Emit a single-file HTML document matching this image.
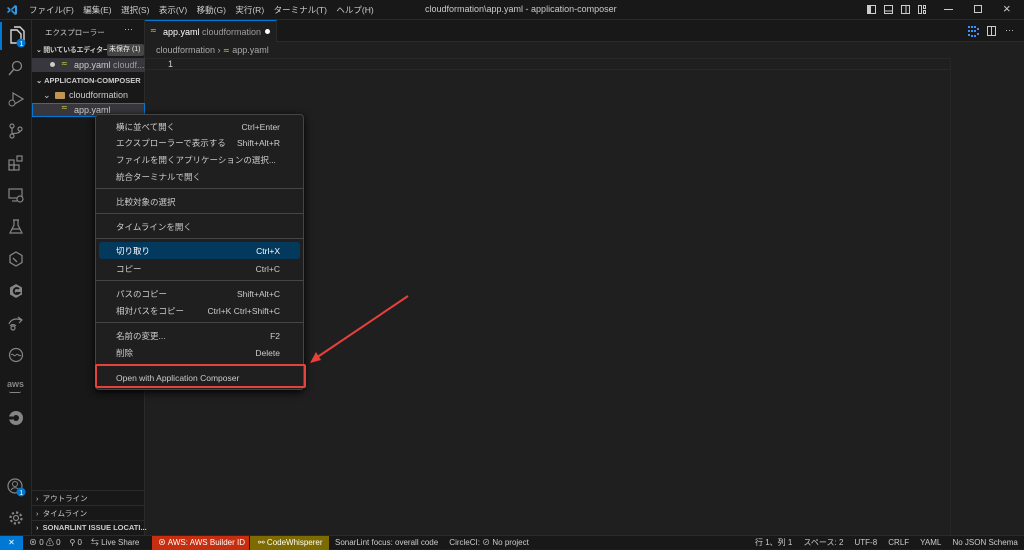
<!DOCTYPE html><html><head><meta charset="utf-8"><style>
*{margin:0;padding:0;box-sizing:border-box}
body{width:1024px;height:549px;overflow:hidden;background:#1f1f1f;font-family:"Liberation Sans","Noto Sans CJK JP",sans-serif;font-size:9px;color:#ccc;position:relative}
.a{position:absolute;white-space:nowrap}
.mi{position:absolute;left:20px;right:6px;height:16px;line-height:16px;padding:0 0 0 0;font-size:8.5px}
.mi span{position:absolute;right:17px}
.sep{position:absolute;left:0;right:0;height:1px;background:#454545}
</style></head><body>
<div class="a" style="left:0;top:0;width:1024px;height:20px;background:#181818;border-bottom:1px solid #2b2b2b"></div>
<svg class="a" style="left:6px;top:4px" width="12" height="12" viewBox="0 0 12 12"><path d="M9 1L4 6l5 5 2-1V2z M9 3.5L6 6l3 2.5z M1 4l1-1 4 3-4 3-1-1 2-2z" fill="#2f9ae8" fill-rule="evenodd"/></svg>
<div class="a" style="left:29px;top:4px;color:#ccc;font-size:8.5px">ファイル(F)&nbsp;&nbsp;&nbsp;&nbsp;編集(E)&nbsp;&nbsp;&nbsp;&nbsp;選択(S)&nbsp;&nbsp;&nbsp;&nbsp;表示(V)&nbsp;&nbsp;&nbsp;&nbsp;移動(G)&nbsp;&nbsp;&nbsp;&nbsp;実行(R)&nbsp;&nbsp;&nbsp;&nbsp;ターミナル(T)&nbsp;&nbsp;&nbsp;&nbsp;ヘルプ(H)</div>
<div class="a" style="left:425px;top:4px;color:#ccc">cloudformation\app.yaml - application-composer</div>
<svg class="a" style="left:866px;top:4px" width="60" height="11"><g fill="none" stroke="#ccc" stroke-width="1"><rect x="1.5" y="1.5" width="8" height="8"/><rect x="18.5" y="1.5" width="8" height="8"/><line x1="18" y1="7" x2="27" y2="7"/><rect x="35.5" y="1.5" width="8" height="8"/><line x1="40" y1="2" x2="40" y2="9"/><rect x="52.5" y="1.5" width="3" height="8"/><rect x="57.5" y="1.5" width="2" height="3"/><rect x="57.5" y="6.5" width="2" height="3"/></g><rect x="2" y="2" width="3" height="7" fill="#ccc"/></svg>
<div class="a" style="left:944px;top:9px;width:9px;height:1px;background:#ccc"></div>
<div class="a" style="left:974px;top:5px;width:8px;height:8px;border:1px solid #ccc"></div>
<div class="a" style="left:1003px;top:1px;font-size:13px;color:#ccc">×</div>
<div class="a" style="left:0;top:20px;width:32px;height:515px;background:#181818;border-right:1px solid #2b2b2b"></div>
<div class="a" style="left:0;top:22px;width:2px;height:28px;background:#0078d4"></div>
<svg class="a" style="left:7px;top:26px" width="20" height="22"><path d="M4 4h6l4 4v9H4z M7 1h6l4 4v10" fill="none" stroke="#d7d7d7" stroke-width="1.4"/><circle cx="14" cy="17" r="4.5" fill="#0078d4"/><text x="12.5" y="20" font-size="7" fill="#fff">1</text></svg>
<svg class="a" style="left:8px;top:60px" width="16" height="16"><circle cx="9" cy="6" r="4.5" fill="none" stroke="#858585" stroke-width="1.3"/><line x1="6" y1="9" x2="1" y2="15" stroke="#858585" stroke-width="1.4"/></svg>
<svg class="a" style="left:8px;top:91px" width="16" height="16"><path d="M5 2l10 6-10 6z" fill="none" stroke="#858585" stroke-width="1.2"/><circle cx="4" cy="12" r="3" fill="#181818" stroke="#858585"/></svg>
<svg class="a" style="left:8px;top:123px" width="16" height="16"><g fill="none" stroke="#858585" stroke-width="1.2"><circle cx="4" cy="3" r="2"/><circle cx="4" cy="13" r="2"/><circle cx="12" cy="6" r="2"/><path d="M4 5v6M12 8c0 3-8 2-8 3"/></g></svg>
<svg class="a" style="left:8px;top:155px" width="16" height="16"><g fill="none" stroke="#858585" stroke-width="1.2"><rect x="1" y="5" width="5" height="5"/><rect x="6" y="10" width="5" height="5"/><rect x="1" y="10" width="5" height="5"/><rect x="9" y="1" width="5" height="5"/></g></svg>
<svg class="a" style="left:8px;top:187px" width="16" height="16"><g fill="none" stroke="#858585" stroke-width="1.2"><rect x="1" y="2" width="13" height="9"/><circle cx="12" cy="12" r="3" fill="#181818"/><path d="M4 14h5"/></g></svg>
<svg class="a" style="left:8px;top:219px" width="16" height="16"><path d="M6 1v5L2 14h12L10 6V1M5 1h6M4 10h8" fill="none" stroke="#858585" stroke-width="1.2"/></svg>
<svg class="a" style="left:8px;top:251px" width="16" height="16"><path d="M8 1l6 3.5v7L8 15l-6-3.5v-7z M5 7l4 4" fill="none" stroke="#858585" stroke-width="1.3"/></svg>
<svg class="a" style="left:8px;top:283px" width="16" height="16"><path d="M8 1l6 3.5v7L8 15l-6-3.5v-7z" fill="#858585"/><path d="M11 6a3 3 0 1 0 0 4H8" fill="none" stroke="#181818" stroke-width="2"/></svg>
<svg class="a" style="left:8px;top:315px" width="16" height="16"><g fill="none" stroke="#858585" stroke-width="1.2"><path d="M1 9c2-5 7-6 12-4M10 2l4 3-3 3"/><circle cx="5" cy="13" r="2"/><path d="M2 11c2-2 4-2 6 0"/></g></svg>
<svg class="a" style="left:8px;top:347px" width="16" height="16"><circle cx="8" cy="8" r="6.5" fill="none" stroke="#858585" stroke-width="1.2"/><path d="M3 8q1.2-1.5 2.5 0t2.5 0 2.5 0 2.5 0" fill="none" stroke="#858585"/></svg>
<div class="a" style="left:7px;top:379px;font-size:9px;color:#858585;font-weight:bold">aws</div>
<div class="a" style="left:9px;top:391px;width:12px;height:2px;border-bottom:1px solid #858585;border-radius:0 0 6px 6px"></div>
<svg class="a" style="left:8px;top:410px" width="16" height="16"><circle cx="8" cy="8" r="7" fill="#858585"/><circle cx="8" cy="8" r="3" fill="#181818"/><rect x="0" y="6.5" width="5" height="3" fill="#181818"/></svg>
<svg class="a" style="left:7px;top:478px" width="20" height="20"><circle cx="8" cy="8" r="7" fill="none" stroke="#858585" stroke-width="1.2"/><circle cx="8" cy="6" r="2.5" fill="none" stroke="#858585"/><path d="M4 12c2-3 6-3 8 0" fill="none" stroke="#858585"/><circle cx="14" cy="14" r="4.5" fill="#0078d4"/><text x="12.3" y="17" font-size="7" fill="#fff">1</text></svg>
<svg class="a" style="left:8px;top:510px" width="16" height="16"><circle cx="8" cy="8" r="2.5" fill="none" stroke="#858585" stroke-width="1.2"/><circle cx="8" cy="8" r="5.5" fill="none" stroke="#858585" stroke-width="2.2" stroke-dasharray="2.2 2.1"/></svg>
<div class="a" style="left:32px;top:20px;width:113px;height:515px;background:#181818;border-right:1px solid #2b2b2b"></div>
<div class="a" style="left:45px;top:27px;font-size:7.5px;color:#ccc">エクスプローラー</div>
<div class="a" style="left:124px;top:24px;color:#ccc">···</div>
<div class="a" style="left:36px;top:45px;font-size:7px;font-weight:bold;color:#ccc;letter-spacing:-0.3px">⌄ 開いているエディター</div>
<div class="a" style="left:107px;top:44px;width:37px;height:12px;background:#454545;border-radius:2px;font-size:7px;color:#eee;line-height:12px;padding-left:2px">未保存 (1)</div>
<div class="a" style="left:32px;top:58px;width:113px;height:14px;background:#37373d"></div>
<div class="a" style="left:50px;top:62px;width:5px;height:5px;border-radius:50%;background:#ccc"></div>
<div class="a" style="left:61px;top:59px;color:#cbcb41;font-size:8px">≂</div>
<div class="a" style="left:74px;top:60px;color:#ccc">app.yaml <span style="color:#9d9d9d">cloudf...</span></div>
<div class="a" style="left:36px;top:76px;font-size:7.5px;font-weight:bold;color:#ccc">⌄ APPLICATION-COMPOSER</div>
<div class="a" style="left:43px;top:90px;color:#ccc">⌄</div>
<div class="a" style="left:55px;top:92px;width:10px;height:7px;background:#c09553;border-radius:1px"></div>
<div class="a" style="left:69px;top:90px;color:#ccc">cloudformation</div>
<div class="a" style="left:32px;top:103px;width:113px;height:14px;background:#37373d;border:1px solid #0078d4"></div>
<div class="a" style="left:61px;top:103px;color:#cbcb41;font-size:8px">≂</div>
<div class="a" style="left:74px;top:105px;color:#ccc">app.yaml</div>
<div class="a" style="left:32px;top:490px;width:113px;height:1px;background:#2b2b2b"></div>
<div class="a" style="left:36px;top:493px;font-size:7.5px;color:#ccc">›&nbsp; アウトライン</div>
<div class="a" style="left:32px;top:505px;width:113px;height:1px;background:#2b2b2b"></div>
<div class="a" style="left:36px;top:508px;font-size:7.5px;color:#ccc">›&nbsp; タイムライン</div>
<div class="a" style="left:32px;top:520px;width:113px;height:1px;background:#2b2b2b"></div>
<div class="a" style="left:36px;top:523px;font-size:7.5px;font-weight:bold;color:#ccc">›&nbsp; SONARLINT ISSUE LOCATI...</div>
<div class="a" style="left:145px;top:20px;width:879px;height:22px;background:#181818;border-bottom:1px solid #2b2b2b"></div>
<div class="a" style="left:145px;top:20px;width:132px;height:22px;background:#1f1f1f;border-top:1px solid #0078d4;border-right:1px solid #2b2b2b"></div>
<div class="a" style="left:150px;top:26px;color:#cbcb41;font-size:8px">≂</div>
<div class="a" style="left:163px;top:27px;color:#fff">app.yaml <span style="color:#9d9d9d">cloudformation</span></div>
<div class="a" style="left:265px;top:29px;width:5px;height:5px;border-radius:50%;background:#fff"></div>
<svg class="a" style="left:968px;top:26px" width="11" height="11"><g fill="#3794ff"><rect x="0" y="0" width="2" height="2"/><rect x="3" y="0" width="2" height="2"/><rect x="6" y="0" width="2" height="2"/><rect x="9" y="2" width="2" height="2"/><rect x="0" y="4" width="2" height="2"/><rect x="3" y="4" width="2" height="2"/><rect x="6" y="4" width="2" height="2"/><rect x="9" y="7" width="2" height="2"/><rect x="0" y="8" width="2" height="2"/><rect x="3" y="9" width="2" height="2"/><rect x="6" y="9" width="2" height="2"/></g></svg>
<div class="a" style="left:987px;top:26px;width:9px;height:10px;border:1px solid #ccc"></div><div class="a" style="left:991px;top:26px;width:1px;height:10px;background:#ccc"></div>
<div class="a" style="left:1005px;top:25px;color:#ccc">···</div>
<div class="a" style="left:156px;top:45px;color:#a9a9a9">cloudformation › <span style="color:#cbcb41;font-size:8px">≂</span> app.yaml</div>
<div class="a" style="left:145px;top:58px;width:806px;height:12px;border-top:1px solid #282828;border-bottom:1px solid #282828"></div>
<div class="a" style="left:168px;top:59px;color:#ccc">1</div>
<div class="a" style="left:950px;top:58px;width:1px;height:477px;background:#262626"></div>
<div class="a" style="left:95px;top:114px;width:209px;height:276px;background:#1f1f1f;border:1px solid #454545;border-radius:4px;box-shadow:0 2px 8px #000">
<div class="mi" style="top:4px">横に並べて開く<span>Ctrl+Enter</span></div>
<div class="mi" style="top:20px">エクスプローラーで表示する<span>Shift+Alt+R</span></div>
<div class="mi" style="top:37px">ファイルを開くアプリケーションの選択...</div>
<div class="mi" style="top:54px">統合ターミナルで開く</div>
<div class="sep" style="top:73px"></div>
<div class="mi" style="top:79px">比較対象の選択</div>
<div class="sep" style="top:98px"></div>
<div class="mi" style="top:104px">タイムラインを開く</div>
<div class="sep" style="top:123px"></div>
<div class="a" style="left:3px;top:127px;width:201px;height:17px;background:#04395e;border-radius:3px"></div>
<div class="mi" style="top:128px;color:#fff">切り取り<span>Ctrl+X</span></div>
<div class="mi" style="top:146px">コピー<span>Ctrl+C</span></div>
<div class="sep" style="top:165px"></div>
<div class="mi" style="top:171px">パスのコピー<span>Shift+Alt+C</span></div>
<div class="mi" style="top:188px">相対パスをコピー<span>Ctrl+K Ctrl+Shift+C</span></div>
<div class="sep" style="top:207px"></div>
<div class="mi" style="top:213px">名前の変更...<span>F2</span></div>
<div class="mi" style="top:230px">削除<span>Delete</span></div>
<div class="sep" style="top:249px"></div>
<div class="mi" style="top:255px">Open with Application Composer</div>
</div>
<div class="a" style="left:95px;top:364px;width:211px;height:24px;border:2px solid #e8403a;border-radius:2px"></div>
<svg class="a" style="left:300px;top:290px" width="115" height="80"><line x1="108" y1="6" x2="16" y2="68" stroke="#e8403a" stroke-width="2"/><path d="M10 73l6-11 5 8z" fill="#e8403a"/></svg>
<div class="a" style="left:0;top:535px;width:1024px;height:14px;background:#181818;border-top:1px solid #2b2b2b;font-size:8px;line-height:13px;color:#ccc">
<div class="a" style="left:0;top:0;width:23px;height:14px;background:#0078d4;color:#fff;text-align:center">✕</div>
<div class="a" style="left:29px">⊗ 0 ⚠ 0&nbsp;&nbsp;&nbsp; ⚲ 0&nbsp;&nbsp;&nbsp; ⇆ Live Share</div>
<div class="a" style="left:152px;top:0;width:97px;height:14px;background:#c72e0f;color:#fff;padding-left:6px">⊗ AWS: AWS Builder ID</div>
<div class="a" style="left:250px;top:0;width:79px;height:14px;background:#7d6a00;color:#fff;padding-left:8px">⚯ CodeWhisperer</div>
<div class="a" style="left:335px">SonarLint focus: overall code&nbsp;&nbsp;&nbsp;&nbsp; CircleCI: ⊘ No project</div>
<div class="a" style="left:755px">行 1、列 1&nbsp;&nbsp;&nbsp;&nbsp; スペース: 2&nbsp;&nbsp;&nbsp;&nbsp; UTF-8&nbsp;&nbsp;&nbsp;&nbsp; CRLF&nbsp;&nbsp;&nbsp;&nbsp; YAML&nbsp;&nbsp;&nbsp;&nbsp; No JSON Schema&nbsp;&nbsp;&nbsp;&nbsp; 🔔︎</div>
</div>
</body></html>
